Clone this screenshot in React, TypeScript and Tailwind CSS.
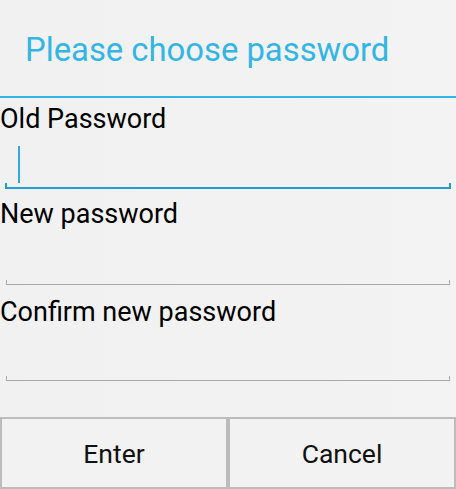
import React from 'react';

const Label = ({ text, className }: { text: string; className: string }) => (
  <div className={`text-[27px] leading-[32px] text-black ${className}`}>{text}</div>
);

const App = () => {
  return (
    <div
      className="w-[456px] h-[489px] overflow-hidden bg-gradient-to-r from-[#f1f1f1] to-[#f3f3f3] flex flex-col"
      style={{ fontFamily: 'Roboto, "Liberation Sans", sans-serif' }}
    >
      {/* Title */}
      <div className="h-[96px] pl-[25px] pt-[28px] text-[32.8px] leading-[44px] text-[#33b5e5]">
        Please choose password
      </div>
      <div className="h-[2px] bg-[#33b5e5]" />

      {/* Old password (focused) */}
      <Label text="Old Password" className="mt-[5px]" />
      <div className="mx-[5px]">
        <div className="h-[48px] pl-[13px] pt-[11px]">
          <div className="w-[2px] h-[37px] bg-[#33a8e0]" />
        </div>
        <div className="h-[6px] border-x-2 border-b-2 border-[#1f9dd6]" />
      </div>

      {/* New password */}
      <Label text="New password" className="mt-[9px]" />
      <div className="mx-[6px]">
        <div className="h-[50px]" />
        <div className="h-[5px] border-x border-b border-[#a9a9a9]" />
      </div>

      {/* Confirm */}
      <Label text="Confirm new password" className="mt-[11px]" />
      <div className="mx-[6px]">
        <div className="h-[48px]" />
        <div className="h-[5px] border-x border-b border-[#a9a9a9]" />
      </div>

      {/* Buttons */}
      <div className="mt-[36px] flex">
        <button className="w-[228px] h-[72px] border-2 border-[#bcbcbc] bg-[#f2f2f2] pt-[2px] text-[26.5px] text-[#111]">
          Enter
        </button>
        <button className="w-[228px] h-[72px] border-2 border-[#bcbcbc] bg-[#f2f2f2] pt-[2px] text-[26.5px] text-[#111]">
          Cancel
        </button>
      </div>
    </div>
  );
};

export default App;
